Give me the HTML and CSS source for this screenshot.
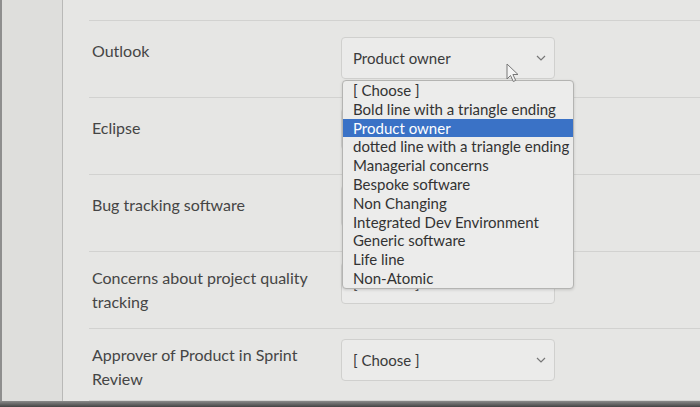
FILE: index.html
```html
<!DOCTYPE html>
<html>
<head>
<meta charset="utf-8">
<link rel="stylesheet" href="styles.css">
</head>
<body>
<div class="screen">
  <div class="main">
    <div class="gutter"></div>
    <div class="panel">
      <div class="row">
        <div class="label">Outlook</div>
        <div class="field first">
          <div class="select">
            <span>Product owner</span>
            <svg class="chev" width="10" height="6" viewBox="0 0 10 6"><path d="M1 1l4 4 4-4" fill="none" stroke="#777" stroke-width="1.2"/></svg>
          </div>
          <svg class="cursor" width="14" height="20" viewBox="0 0 14 20"><path d="M1 1v15l3.5-3.5 2.8 6 2.4-1.1-2.8-5.9H12z" fill="#f4f4f4" stroke="#777" stroke-width="1"/></svg>
          <ul class="menu">
            <li>[ Choose ]</li>
            <li>Bold line with a triangle ending</li>
            <li class="sel">Product owner</li>
            <li>dotted line with a triangle ending</li>
            <li>Managerial concerns</li>
            <li>Bespoke software</li>
            <li>Non Changing</li>
            <li>Integrated Dev Environment</li>
            <li>Generic software</li>
            <li>Life line</li>
            <li>Non-Atomic</li>
          </ul>
        </div>
      </div>
      <div class="row">
        <div class="label">Eclipse</div>
        <div class="field">
          <div class="select"></div>
        </div>
      </div>
      <div class="row">
        <div class="label">Bug tracking software</div>
        <div class="field">
          <div class="select"></div>
        </div>
      </div>
      <div class="row">
        <div class="label two">Concerns about project quality tracking</div>
        <div class="field">
          <div class="select"><span class="hidden-text">[ Choose ]</span></div>
        </div>
      </div>
      <div class="row">
        <div class="label two">Approver of Product in Sprint Review</div>
        <div class="field">
          <div class="select">
            <span>[ Choose ]</span>
            <svg class="chev" width="10" height="6" viewBox="0 0 10 6"><path d="M1 1l4 4 4-4" fill="none" stroke="#777" stroke-width="1.2"/></svg>
          </div>
        </div>
      </div>
    </div>
  </div>
  <div class="bezel"></div>
</div>
</body>
</html>
```

FILE: styles.css
```css
html, body {
  margin: 0;
  padding: 0;
}
body {
  width: 700px;
  height: 407px;
  overflow: hidden;
  font-family: Lato, "Open Sans", sans-serif;
  color: #3d3d3d;
  background: #e3e3e1;
}
.screen {
  height: 407px;
  display: flex;
  flex-direction: column;
}
.main {
  flex: 1;
  display: flex;
  min-height: 0;
}
.gutter {
  width: 62px;
  background: #dededc;
  border-left: 2px solid #8e8e8e;
  box-sizing: border-box;
}
.panel {
  flex: 1;
  border-left: 1px solid #b9b9b7;
  background: #e6e6e4;
  padding: 20px 0 0 26px;
  display: flex;
  flex-direction: column;
}
.row {
  height: 77px;
  border-top: 1px solid #d2d2d0;
  display: flex;
  box-sizing: border-box;
  flex-shrink: 0;
}
.row:last-child {
  flex: 1;
  border-bottom: 1px solid #d2d2d0;
}
.label {
  width: 228px;
  padding: 18px 0 0 3px;
  margin-right: 21px;
  font-size: 16px;
  line-height: 24px;
  color: #454545;
}
.label.two {
  padding-top: 14px;
}
.field {
  position: relative;
  padding-top: 10px;
}
.field.first {
  padding-top: 16px;
}
.select {
  width: 214px;
  height: 42px;
  box-sizing: border-box;
  border: 1px solid #d0d0ce;
  border-radius: 4px;
  background: #ebebea;
  display: flex;
  align-items: center;
  justify-content: space-between;
  padding: 0 8px 0 11px;
  font-size: 15px;
  color: #3a3a3a;
}
.hidden-text {
  color: #555;
}
.chev {
  display: block;
}
.cursor {
  position: absolute;
  left: 165px;
  top: 42px;
  z-index: 3;
}
.menu {
  position: absolute;
  left: 1px;
  top: 59px;
  width: 232px;
  margin: 0;
  padding: 0;
  list-style: none;
  background: #ececeb;
  border: 1px solid #b4b4b2;
  border-radius: 4px;
  box-sizing: border-box;
  box-shadow: 0 1px 3px rgba(0,0,0,0.15);
  z-index: 2;
  font-size: 15px;
  color: #333;
}
.menu li {
  height: 18.8px;
  line-height: 18.8px;
  padding-left: 10px;
  white-space: nowrap;
}
.menu li.sel {
  background: #3a72c6;
  color: #fff;
}
.bezel {
  height: 6px;
  background: linear-gradient(#8a8a8a, #444);
}
```
